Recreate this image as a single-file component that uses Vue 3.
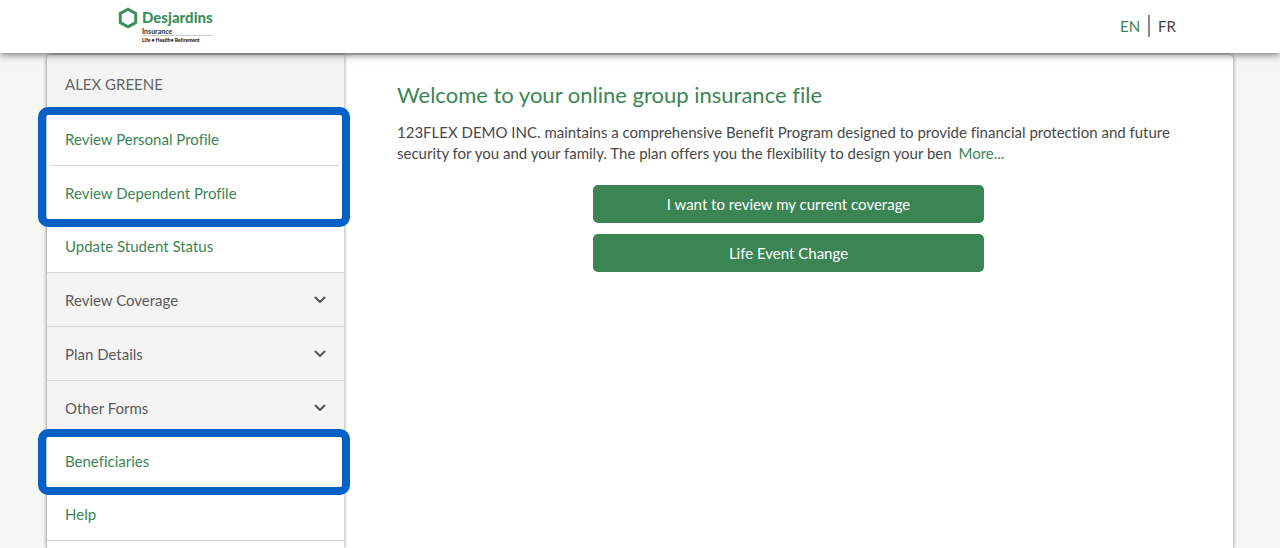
<script setup>
const groups = [
  {
    highlighted: true,
    items: [{ label: 'Review Personal Profile' }, { label: 'Review Dependent Profile' }],
  },
  {
    items: [
      { label: 'Update Student Status' },
      { label: 'Review Coverage', expandable: true },
      { label: 'Plan Details', expandable: true },
      { label: 'Other Forms', expandable: true },
    ],
  },
  { highlighted: true, items: [{ label: 'Beneficiaries' }] },
  { divided: true, items: [{ label: 'Help' }] },
]
</script>

<template>
  <div class="page">
    <header class="topbar">
      <a class="logo" href="#" aria-label="Desjardins Insurance">
        <svg class="mark" viewBox="0 0 20 22" aria-hidden="true">
          <path d="M10 2.200 17.700 6.500v9L10 19.800 2.300 15.500v-9Z" />
        </svg>
        <span class="brand">
          <span class="brand-name">Desjardins</span>
          <span class="brand-line">Insurance</span>
          <span class="brand-tag">Life • Health• Retirement</span>
        </span>
      </a>
      <nav class="languages" aria-label="Language">
        <a class="current" href="#en">EN</a>
        <a href="#fr">FR</a>
      </nav>
    </header>

    <div class="card">
      <aside class="sidebar">
        <div class="member">ALEX GREENE</div>
        <nav aria-label="Main">
          <ul
            v-for="(group, i) in groups"
            :key="i"
            class="group"
            :class="{ highlighted: group.highlighted, divided: group.divided }"
          >
            <li v-for="item in group.items" :key="item.label">
              <button v-if="item.expandable" class="row toggle" type="button" aria-expanded="false">
                {{ item.label }}
                <svg viewBox="0 0 12 8" aria-hidden="true"><path d="M1.500 1.500 6 6l4.500-4.500" /></svg>
              </button>
              <a v-else class="row" href="#">{{ item.label }}</a>
            </li>
          </ul>
        </nav>
      </aside>

      <main class="content">
        <h1>Welcome to your online group insurance file</h1>
        <p>
          123FLEX DEMO INC. maintains a comprehensive Benefit Program designed to provide financial
          protection and future security for you and your family. The plan offers you the flexibility
          to design your ben <a href="#more">More...</a>
        </p>
        <div class="actions">
          <button type="button">I want to review my current coverage</button>
          <button type="button">Life Event Change</button>
        </div>
      </main>
    </div>
  </div>
</template>

<style>
body {
  margin: 0;
}
</style>

<style scoped>
.page {
  display: flex;
  flex-direction: column;
  min-height: 100vh;
  background: #f5f7f2;
  color: #484848;
  font: 15px/22px Lato, "Open Sans", sans-serif;
  font-variant-ligatures: none;
}
a {
  color: #3b8554;
  text-decoration: none;
}
.topbar {
  position: relative;
  z-index: 1;
  display: flex;
  align-items: flex-start;
  justify-content: space-between;
  box-sizing: border-box;
  height: 53px;
  padding: 7px 104px 0 118px;
  background: #fff;
  box-shadow: 0 1px 8px rgba(0, 0, 0, 0.6);
}
.logo {
  display: flex;
  gap: 4px;
}
.mark {
  width: 20px;
  height: 22px;
  fill: none;
  stroke: #3b8f5a;
  stroke-width: 3;
}
.brand {
  display: flex;
  flex-direction: column;
}
.brand-name {
  font-size: 15px;
  font-weight: 900;
  line-height: 21px;
  color: #3b8f5a;
}
.brand-line {
  border-bottom: 1px solid #ccc;
  font-size: 7px;
  font-weight: 900;
  line-height: 7px;
  color: #444;
}
.brand-tag {
  font-size: 5px;
  font-weight: 900;
  line-height: 9px;
  color: #222;
}
.languages {
  display: flex;
  padding-top: 8px;
}
.languages a {
  line-height: 22px;
  color: #444;
}
.languages .current {
  padding-right: 8px;
  border-right: 2px solid #888;
  margin-right: 8px;
  color: #3b8554;
}
.card {
  display: flex;
  flex: 1;
  margin: 2px 47px 0;
  border-radius: 4px 4px 0 0;
  background: #fff;
  box-shadow: 0 0 4px rgba(0, 0, 0, 0.45);
}
.sidebar {
  flex: 0 0 297px;
  box-shadow: 1px 0 3px rgba(0, 0, 0, 0.28);
}
.member {
  box-sizing: border-box;
  height: 57px;
  padding: 18px 18px 0;
  border-radius: 4px 0 0 0;
  background: #f4f4f4;
  color: #666;
}
.group {
  position: relative;
  margin: 0;
  padding: 0;
  list-style: none;
}
.group li:not(:last-child),
.divided li {
  border-bottom: 1px solid #d8d8d8;
}
.group.highlighted li {
  margin: 0 5px 0 3px;
}
.highlighted {
  z-index: 1;
}
.highlighted::after {
  content: "";
  position: absolute;
  inset: -5px -6px -8px -9px;
  border: 8px solid #0260c6;
  border-radius: 10px;
  pointer-events: none;
}
.row {
  display: flex;
  align-items: center;
  justify-content: space-between;
  box-sizing: border-box;
  width: 100%;
  height: 53px;
  padding: 0 18px;
}
.highlighted .row {
  padding-left: 15px;
}
.toggle {
  border: 0;
  background: #f4f4f4;
  color: #5a5a5a;
  font: inherit;
  font-variant-ligatures: none;
}
.toggle svg {
  width: 12px;
  height: 8px;
  fill: none;
  stroke: #555;
  stroke-width: 2;
  stroke-linecap: round;
  stroke-linejoin: round;
}
.content {
  flex: 1;
  padding: 26px 53px 0;
}
h1 {
  margin: 0;
  color: #3b8554;
  font-size: 22px;
  font-weight: 400;
  line-height: 28px;
}
p {
  margin: 13px 0 0;
  line-height: 21px;
}
p a {
  margin-left: 3px;
}
.actions {
  display: grid;
  gap: 11px;
  width: 50%;
  margin: 21px auto 0;
}
.actions button {
  height: 38px;
  padding: 0 12px 1px;
  border: 0;
  border-radius: 5px;
  background: #3b8554;
  color: #fff;
  font: inherit;
}
</style>
